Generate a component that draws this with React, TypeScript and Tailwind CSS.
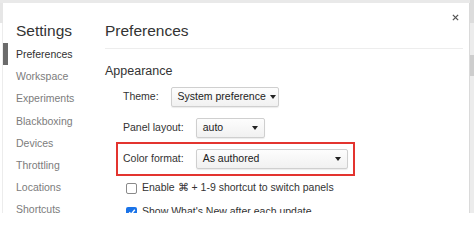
const navItems = [
  'Preferences',
  'Workspace',
  'Experiments',
  'Blackboxing',
  'Devices',
  'Throttling',
  'Locations',
  'Shortcuts',
];

const Arrow = () => (
  <svg width="6" height="4" viewBox="0 0 6 4" className="shrink-0">
    <polygon points="0,0 6,0 3,4" fill="#222" />
  </svg>
);

const Select = ({ value, width }: { value: string; width: string }) => (
  <div
    className={`flex h-[20px] ${width} shrink-0 items-center justify-between gap-1 whitespace-nowrap rounded-[2px] border border-[#cfcfcf] bg-gradient-to-b from-[#fdfdfd] to-[#f1f1f1] pl-[6px] pr-[6px] text-[10.5px] text-[#222] shadow-[0_1px_1px_rgba(0,0,0,0.08)]`}
  >
    <span>{value}</span>
    <Arrow />
  </div>
);

export default function App() {
  return (
    <div
      className="flex h-[213px] w-[474px] flex-col overflow-hidden bg-white"
      style={{ fontFamily: '"Liberation Sans", Arial, sans-serif' }}
    >
      <div className="flex h-[3px] shrink-0">
        <div className="flex-1 bg-[#e9e9e9]" />
        <div className="w-[4px] bg-[#dcdcdc]" />
      </div>
      <div className="flex flex-1">
        <div className="flex w-[3px] flex-col">
          <div className="h-[20px] bg-[#e6e6e6]" />
          <div className="flex-1 border-r border-[#ececec] bg-white" />
        </div>

        <div className="relative flex flex-1 border-r border-[#dadada] bg-white">
          <button className="absolute right-[9px] top-[9px] flex h-[10px] w-[10px] items-center justify-center">
            <svg width="7" height="7" viewBox="0 0 8 8">
              <path d="M1 1L7 7M7 1L1 7" stroke="#555" strokeWidth="1.5" />
            </svg>
          </button>

          {/* sidebar */}
          <div className="w-[102px] shrink-0 pt-[18px]">
            <div className="pl-[13px] text-[15.5px] leading-[20px] text-[#333]">Settings</div>
            <div className="mt-[2px] flex flex-col">
              {navItems.map((item, i) => (
                <div
                  key={item}
                  className={`h-[22.2px] border-l-[5px] pl-[8px] text-[10.5px] leading-[22px] ${
                    i === 0 ? 'border-[#6b6b6b] text-[#303030]' : 'border-transparent text-[#7c7c7c]'
                  }`}
                >
                  {item}
                </div>
              ))}
            </div>
          </div>

          {/* main */}
          <div className="flex-1 pr-[6px] pt-[18px]">
            <div className="border-b border-[#ededed] pb-[7px] text-[15.5px] leading-[20px] text-[#333]">
              Preferences
            </div>
            <div className="mt-[14px] text-[12.5px] leading-[16px] text-[#333]">Appearance</div>

            <div className="mt-[8px] whitespace-nowrap pl-[11px] text-[10.5px] text-[#333]">
              <div className="flex items-center gap-3 pl-[7px]">
                <span>Theme:</span>
                <Select value="System preference" width="w-[108px]" />
              </div>
              <div className="mt-[11px] flex items-center gap-3 pl-[7px]">
                <span>Panel layout:</span>
                <Select value="auto" width="w-[69px]" />
              </div>
              <div className="mt-[4px] flex w-[239px] items-center gap-3 border-2 border-[#e3342f] px-[5px] py-[5px]">
                <span>Color format:</span>
                <Select value="As authored" width="w-[152px]" />
              </div>
              <div className="mt-[4px] flex h-[16px] items-center gap-[5px] pl-[10px]">
                <span className="h-[11px] w-[11px] rounded-[2px] border border-[#8a8a8a] bg-white" />
                <span>Enable ⌘ + 1-9 shortcut to switch panels</span>
              </div>
              <div className="mt-[8px] flex h-[16px] items-center gap-[5px] pl-[10px]">
                <span className="flex h-[11px] w-[11px] items-center justify-center rounded-[2px] bg-[#1a73e8]">
                  <svg width="8" height="8" viewBox="0 0 8 8">
                    <path d="M1.2 4.2L3.2 6.2L6.8 1.8" stroke="#fff" strokeWidth="1.4" fill="none" />
                  </svg>
                </span>
                <span>Show What's New after each update</span>
              </div>
            </div>
          </div>
        </div>

        <div className="flex w-[4px] flex-col">
          <div className="h-[20px] bg-[#dcdcdc]" />
          <div className="h-[32px] bg-[#ececec]" />
          <div className="h-[21px] bg-[#cdcdcd]" />
          <div className="flex-1 bg-[#ececec]" />
        </div>
      </div>
    </div>
  );
}
